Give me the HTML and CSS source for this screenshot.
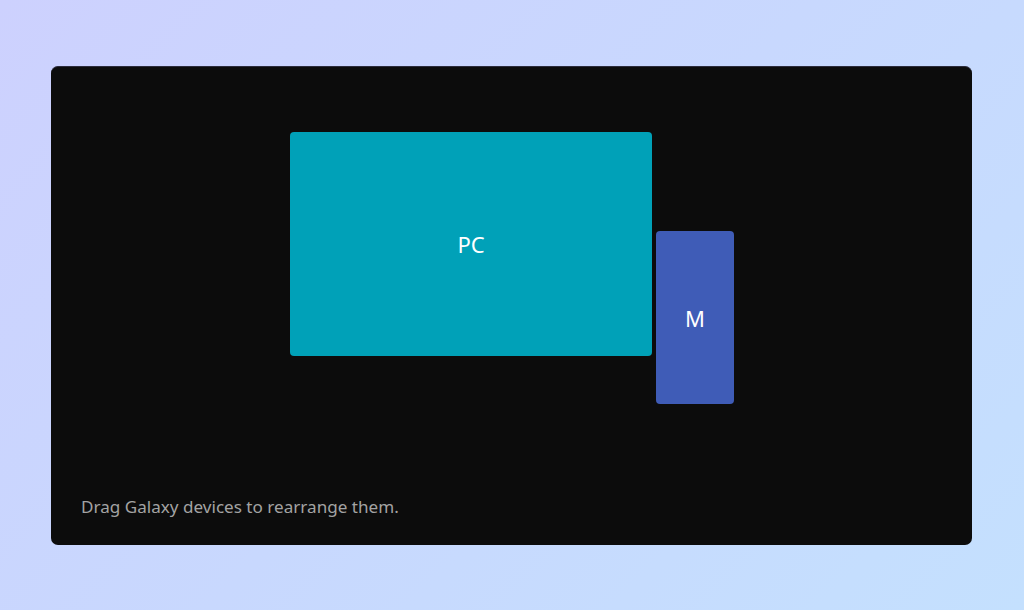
FILE: index.html
```html
<!DOCTYPE html>
<html>
<head>
<meta charset="utf-8">
<link rel="stylesheet" href="styles.css">
</head>
<body>
<div class="stage">
  <div class="panel">
    <div class="canvas">
      <div class="device pc">PC</div>
      <div class="device mobile">M</div>
    </div>
    <div class="hint">Drag Galaxy devices to rearrange them.</div>
  </div>
</div>
</body>
</html>
```
FILE: styles.css
```css
html, body {
  margin: 0;
  padding: 0;
}
body {
  width: 1024px;
  height: 610px;
  overflow: hidden;
  background: linear-gradient(135deg, #cdd1fe 0%, #c8d8fe 50%, #c4e0fe 100%);
  font-family: "Noto Sans", "Open Sans", sans-serif;
}
.stage {
  padding: 66px 0 0 51px;
}
.panel {
  width: 921px;
  height: 479px;
  box-sizing: border-box;
  background: #0c0c0c;
  border-radius: 7px;
  border-top: 1px solid #2c2c3c;
  display: flex;
  flex-direction: column;
}
.canvas {
  position: relative;
  flex: 1;
}
.device {
  position: absolute;
  display: flex;
  align-items: center;
  justify-content: center;
  color: #ffffff;
  border-radius: 4px;
  font-size: 22px;
}
.pc {
  left: 239px;
  top: 65px;
  width: 362px;
  height: 224px;
  background: #00a1b8;
}
.mobile {
  left: 605px;
  top: 164px;
  width: 78px;
  height: 173px;
  background: #3f5cb7;
}
.hint {
  padding: 0 0 26px 30px;
  color: #a3a3a3;
  font-size: 17.1px;
  line-height: 24px;
}
```
